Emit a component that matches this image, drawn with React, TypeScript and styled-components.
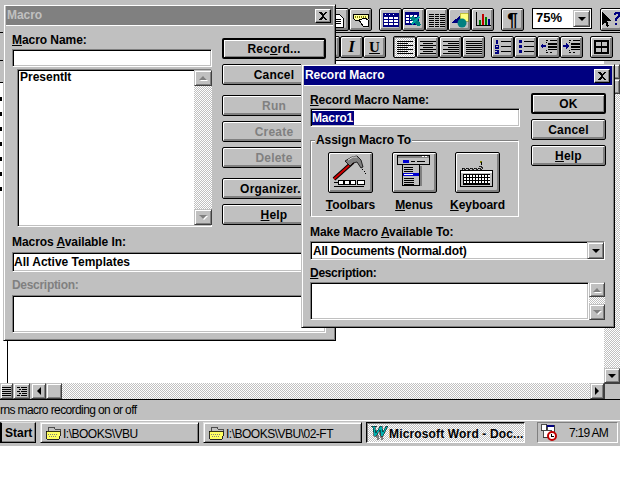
import React from "react";
import styled, { createGlobalStyle, css } from "styled-components";

const Global = createGlobalStyle`
  html, body { margin: 0; padding: 0; background: #fff; }
  body { font-family: "Liberation Sans", Arial, sans-serif; font-size: 12px; color: #000; }
  * { box-sizing: border-box; }
`;

const hatch = css`
  background: repeating-conic-gradient(#c0c0c0 0 25%, #fff 0 50%) 0 0 / 2px 2px;
`;
const raised = css`
  background: #c0c0c0;
  border: 1px solid;
  border-color: #dfdfdf #000 #000 #dfdfdf;
  box-shadow: inset 1px 1px #fff, inset -1px -1px #808080;
`;
const sunken = css`
  border: 1px solid;
  border-color: #808080 #fff #fff #808080;
  box-shadow: inset 1px 1px #000, inset -1px -1px #c0c0c0;
  background: #fff;
`;

const Screen = styled.div`
  position: relative;
  width: 620px;
  height: 446px;
  overflow: hidden;
  background: #c0c0c0;
  display: flex;
  flex-direction: column;
`;

const ToolRow = styled.div<{ $left: number; $top: number; $h: number; $bottom: number }>`
  display: flex;
  flex: none;
  padding: ${(p) => p.$top}px 0 ${(p) => p.$bottom}px ${(p) => p.$left}px;
  height: ${(p) => p.$top + p.$h + p.$bottom + 1}px;
  border-bottom: 1px solid #000;
  overflow: hidden;
`;
const ToolGroup = styled.div<{ $after?: number }>`
  display: flex;
  flex: none;
  margin-right: ${(p) => p.$after ?? 0}px;
`;
const ToolBtn = styled.div<{ $on?: boolean }>`
  flex: none;
  width: 23px;
  height: 100%;
  display: flex;
  align-items: center;
  justify-content: center;
  font-weight: bold;
  border: 1px solid #000;
  border-radius: 2px;
  background: #c0c0c0;
  box-shadow: inset 1px 1px #fff, inset -1px -1px #808080, inset -2px -2px #808080;
  ${(p) =>
    p.$on &&
    css`
      ${hatch};
      box-shadow: inset 1px 1px #808080;
    `}
`;
const Pilcrow = styled.span`
  font-family: "Liberation Sans", sans-serif;
  font-size: 19px;
  font-weight: bold;
`;
const ItalicGlyph = styled.span`
  font-family: "Liberation Serif", serif;
  font-size: 17px;
  font-style: italic;
`;
const UnderGlyph = styled.span`
  font-family: "Liberation Serif", serif;
  font-size: 15px;
  text-decoration: underline;
`;
const ZoomCombo = styled.div`
  flex: none;
  width: 60px;
  height: 21px;
  border: 1px solid #000;
  background: #fff;
  display: flex;
  padding: 1px;
`;
const ZoomValue = styled.div`
  flex: 1;
  font-size: 13px;
  font-weight: bold;
  line-height: 16px;
  padding-left: 2px;
`;

const Workspace = styled.div`
  flex: 1;
  display: flex;
  min-height: 0;
`;
const LeftEdge = styled.div`
  flex: none;
  width: 8px;
  border-right: 1px solid #000;
  background: #fff;
  height: 100%;
  display: flex;
  flex-direction: column;
  gap: 11px;
`;
const RulerStub = styled.div`
  flex: none;
  height: 22px;
  background: #c0c0c0;
  border-bottom: 1px solid #000;
  margin-bottom: 3px;
`;
const EdgeMark = styled.div`
  width: 2px;
  height: 4px;
  background: #000;
`;
const DocArea = styled.div`
  flex: 1;
  background: #fff;
`;
const VScroll = styled.div`
  flex: none;
  width: 16px;
  display: flex;
  flex-direction: column;
  padding-top: 3px;
  background: #c0c0c0;
`;
const VTrack = styled.div`
  flex: 1;
  ${hatch};
`;
const ScrollBtn = styled.div<{ $w?: number; $h?: number }>`
  ${raised};
  flex: none;
  width: ${(p) => (p.$w ? `${p.$w}px` : "100%")};
  height: ${(p) => (p.$h ? `${p.$h}px` : "100%")};
  display: flex;
  align-items: center;
  justify-content: center;
  box-shadow: inset 1px 1px #fff, inset -1px -1px #808080;
  border-color: #c0c0c0 #404040 #404040 #c0c0c0;
`;
const Arrow = styled.i<{ $dir: "up" | "down" | "left" | "right"; $off?: boolean }>`
  display: block;
  width: 0;
  height: 0;
  ${(p) => {
    const c = p.$off ? "#808080" : "#000";
    if (p.$dir === "up") return `border:4px solid transparent;border-top:0;border-bottom-color:${c};`;
    if (p.$dir === "down") return `border:4px solid transparent;border-bottom:0;border-top-color:${c};`;
    if (p.$dir === "left") return `border:4px solid transparent;border-left:0;border-right-color:${c};`;
    return `border:4px solid transparent;border-right:0;border-left-color:${c};`;
  }}
  ${(p) => p.$off && "filter: drop-shadow(1px 1px 0 #fff);"}
`;

const HScroll = styled.div`
  flex: none;
  height: 17px;
  display: flex;
  border-bottom: 1px solid #000;
`;
const HTrack = styled.div`
  flex: 1;
  ${hatch};
`;
const ViewBtn = styled(ScrollBtn)<{ $gap?: number }>`
  margin-right: ${(p) => p.$gap ?? 0}px;
`;
const Corner = styled.div`
  flex: none;
  width: 16px;
  background: #c0c0c0;
  border-left: 1px solid #404040;
  border-top: 1px solid #404040;
`;

const StatusBar = styled.div`
  flex: none;
  height: 20px;
  line-height: 21px;
  font-size: 12px;
  white-space: nowrap;
  letter-spacing: -0.6px;
`;
const Taskbar = styled.div`
  flex: none;
  height: 26px;
  border-top: 1px solid #fff;
  display: flex;
  padding-top: 1px;
`;
const StartBtn = styled.div`
  ${raised};
  flex: none;
  width: 36px;
  height: 21px;
  font-weight: bold;
  font-size: 12px;
  line-height: 21px;
  padding-left: 3px;
  margin-right: 4px;
  border-left: 2px solid #000;
  box-shadow: inset -1px -1px #808080;
`;
const TaskBtn = styled.div<{ $active?: boolean; $after: number }>`
  ${raised};
  flex: none;
  width: 159px;
  height: 21px;
  margin-right: ${(p) => p.$after}px;
  display: flex;
  align-items: center;
  padding-left: 4px;
  gap: 1px;
  font-size: 12px;
  white-space: nowrap;
  overflow: hidden;
  ${(p) =>
    p.$active &&
    css`
      ${hatch};
      font-weight: bold;
      border-color: #000 #fff #fff #000;
      box-shadow: inset 1px 1px #808080;
    `}
`;
const TaskLabel = styled.span<{ $wide?: boolean }>`
  padding-top: 2px;
  letter-spacing: ${(p) => (p.$wide ? "0.15px" : "-0.5px")};
`;
const Tray = styled.div`
  flex: none;
  width: 81px;
  height: 21px;
  border: 1px solid;
  border-color: #808080 #fff #fff #808080;
  display: flex;
  align-items: center;
  padding-left: 2px;
  gap: 12px;
  font-size: 12px;
  letter-spacing: -0.7px;
`;
const Clock = styled.span`
  padding-top: 1px;
`;

const Win = styled.div<{ $x: number; $y: number; $w: number; $h: number }>`
  position: absolute;
  left: ${(p) => p.$x}px;
  top: ${(p) => p.$y}px;
  width: ${(p) => p.$w}px;
  height: ${(p) => p.$h}px;
  background: #c0c0c0;
  border: 1px solid;
  border-color: #c0c0c0 #000 #000 #c0c0c0;
  box-shadow: inset 1px 1px #fff, inset -1px -1px #808080;
  padding: 1px 2px 0 2px;
  display: flex;
  flex-direction: column;
`;
const TitleBar = styled.div<{ $active?: boolean }>`
  flex: none;
  height: 20px;
  border-bottom: 1px solid #fff;
  background: ${(p) => (p.$active ? "#000080" : "#808080")};
  color: ${(p) => (p.$active ? "#fff" : "#c0c0c0")};
  font-weight: bold;
  font-size: 12px;
  line-height: 19px;
  padding: 0 2px 0 1px;
  display: flex;
  align-items: center;
  justify-content: space-between;
  letter-spacing: -0.05px;
`;
const CloseBtn = styled.div`
  ${raised};
  width: 16px;
  height: 14px;
  display: flex;
  align-items: center;
  justify-content: center;
  border-color: #fff #000 #000 #fff;
  box-shadow: inset -1px -1px #808080;
`;
const DialogBody = styled.div<{ $top: number; $left: number }>`
  flex: 1;
  padding: ${(p) => p.$top}px 0 0 ${(p) => p.$left}px;
  display: flex;
  flex-direction: column;
`;
const TopRow = styled.div<{ $gap: number }>`
  display: flex;
  gap: ${(p) => p.$gap}px;
  align-items: flex-start;
`;
const Column = styled.div<{ $w: number }>`
  flex: none;
  width: ${(p) => p.$w}px;
  display: flex;
  flex-direction: column;
`;
const ButtonColumn = styled(Column)<{ $pad?: number }>`
  padding-top: ${(p) => p.$pad ?? 0}px;
  gap: 5px;
`;
const Label = styled.div<{ $off?: boolean; $top?: number; $tight?: boolean }>`
  font-weight: bold;
  font-size: 12px;
  line-height: 15px;
  margin-bottom: -2px;
  white-space: nowrap;
  letter-spacing: ${(p) => (p.$tight ? "-0.3px" : "-0.06px")};
  margin-top: ${(p) => p.$top ?? 0}px;
  color: ${(p) => (p.$off ? "#808080" : "#000")};
`;
const Key = styled.span`
  text-decoration: underline;
`;
const TextField = styled.div<{ $h: number; $w?: number; $top?: number; $left?: number }>`
  ${sunken};
  flex: none;
  height: ${(p) => p.$h}px;
  width: ${(p) => (p.$w ? `${p.$w}px` : "100%")};
  margin-top: ${(p) => p.$top ?? 0}px;
  margin-left: ${(p) => p.$left ?? 0}px;
  font-weight: bold;
  font-size: 12px;
  line-height: 16px;
  padding: 1px 1px;
  white-space: nowrap;
  display: flex;
`;
const ListBox = styled(TextField)`
  padding: 0 0 1px 2px;
  justify-content: space-between;
  line-height: 15px;
`;
const Selected = styled.span`
  background: #000080;
  color: #fff;
  height: 14px;
  line-height: 14px;
  margin-top: 1px;
  padding: 0 1px 0 0;
  letter-spacing: -0.15px;
`;
const ListScroll = styled.div`
  flex: none;
  width: 18px;
  height: 100%;
  margin: 0 -1px 0 0;
  display: flex;
  flex-direction: column;
  justify-content: space-between;
  ${hatch};
`;
const Btn = styled.div<{ $default?: boolean; $off?: boolean; $h?: number; $sep?: boolean }>`
  flex: none;
  height: 21px;
  display: flex;
  align-items: center;
  justify-content: center;
  font-weight: bold;
  font-size: 12px;
  letter-spacing: 0.2px;
  margin-top: ${(p) => (p.$sep ? 5 : 0)}px;
  background: #c0c0c0;
  color: ${(p) => (p.$off ? "#808080" : "#000")};
  border: 1px solid #000;
  border-radius: 2px;
  box-shadow: inset 1px 1px #fff, inset -1px -1px #808080, inset -2px -2px #808080;
  ${(p) =>
    p.$default &&
    css`
      border-width: 2px;
      box-shadow: inset 1px 1px #fff, inset -1px -1px #808080;
    `}
`;
const Group = styled.div`
  position: relative;
  height: 77px;
  width: 209px;
  margin-top: 13px;
  border: 1px solid;
  border-color: #808080 #fff #fff #808080;
  box-shadow: inset 1px 1px #fff, 1px 1px #808080 inset;
  padding: 11px 0 0 8px;
  display: grid;
  grid-template-columns: 63px 64px 63px;
`;
const Legend = styled.span`
  position: absolute;
  left: 4px;
  top: -7px;
  background: #c0c0c0;
  padding: 0 1px;
  font-weight: bold;
  font-size: 12px;
  line-height: 13px;
  white-space: nowrap;
  letter-spacing: -0.05px;
`;
const AssignItem = styled.div`
  display: flex;
  flex-direction: column;
  align-items: center;
  gap: 5px;
`;
const BigBtn = styled.div`
  width: 45px;
  height: 41px;
  background: #c0c0c0;
  border: 1px solid #000;
  border-radius: 2px;
  box-shadow: inset 1px 1px #fff, inset -1px -1px #808080, inset -2px -2px #808080;
  display: flex;
`;
const ComboRow = styled.div<{ $w: number; $top?: number }>`
  ${sunken};
  flex: none;
  width: ${(p) => p.$w}px;
  height: 19px;
  margin-top: ${(p) => p.$top ?? 0}px;
  display: flex;
  justify-content: space-between;
  font-weight: bold;
  font-size: 12px;
  line-height: 16px;
  padding: 1px 0 0 2px;
  letter-spacing: -0.2px;
  white-space: nowrap;
`;
const DescRow = styled.div`
  display: flex;
  margin-top: 3px;
`;
const Spin = styled.div`
  flex: none;
  width: 16px;
  height: 38px;
  display: flex;
  flex-direction: column;
  justify-content: space-between;
  ${hatch};
`;
const Px = styled.svg`
  display: block;
  flex: none;
  shape-rendering: crispEdges;
`;
const Smooth = styled.g`
  shape-rendering: auto;
`;

const Lines = ({ rows, color = "#000", w = 16, h = 14 }: { rows: [number, number, number][]; color?: string; w?: number; h?: number }) => (
  <Px width={w} height={h} viewBox={`0 0 ${w} ${h}`}>
    {rows.map(([x, y, l], i) => (
      <rect key={i} x={x} y={y} width={l} height={1} fill={color} />
    ))}
  </Px>
);
const alignLeft: [number, number, number][] = [[0,1,16],[0,3,11],[0,5,16],[0,7,11],[0,9,16],[0,11,11],[0,13,16]];
const alignCenter: [number, number, number][] = [[0,1,16],[3,3,10],[0,5,16],[3,7,10],[0,9,16],[3,11,10],[0,13,16]];
const alignRight: [number, number, number][] = [[0,1,16],[5,3,11],[0,5,16],[5,7,11],[0,9,16],[5,11,11],[0,13,16]];
const justify: [number, number, number][] = [[0,1,16],[0,3,16],[0,5,16],[0,7,16],[0,9,16],[0,11,16],[0,13,16]];

const CloseX = () => (
  <Px width={10} height={8} viewBox="0 0 10 8">
    <path d="M1 0h2l2 2 2-2h2L6 4l3 4H7L5 6 3 8H1l3-4z" fill="#000" />
  </Px>
);
const DocIcon = () => (
  <Px width={15} height={16} viewBox="0 0 15 16">
    <path d="M2 2h7l4 4v9H2z" fill="#fff" stroke="#000" />
    <rect x="4" y="7" width="7" height="1" /><rect x="4" y="9" width="7" height="1" /><rect x="4" y="11" width="7" height="1" />
    <rect x="0" y="1" width="3" height="2" fill="#ff0" />
  </Px>
);
const KeyHand = () => (
  <Px width={18} height={18} viewBox="0 0 18 18">
    <path d="M1 3h15v5l-6 1H3L1 7z" fill="#ffffa0" stroke="#000" />
    {[3,5,7,9,11,13].map((x) => <rect key={x} x={x} y="5" width="1" height="2" fill="#808000" />)}
    <path d="M7 9l4 6h5V9l-3-2z" fill="#fff" stroke="#000" />
  </Px>
);
const TableIcon = () => (
  <Px width={16} height={14} viewBox="0 0 16 14">
    <rect width="16" height="14" fill="#000080" />
    <rect x="2" y="1" width="1" height="1" fill="#fff" /><rect x="6" y="1" width="1" height="1" fill="#fff" /><rect x="10" y="1" width="1" height="1" fill="#fff" />
    {[1,6,11].map((x) => [4,7,10].map((y) => <rect key={`${x}${y}`} x={x} y={y} width="4" height="2" fill="#fff" />))}
  </Px>
);
const SheetIcon = () => (
  <Px width={17} height={15} viewBox="0 0 17 15">
    <rect width="14" height="13" fill="#000080" />
    {[1,5,9].map((x) => [3,6,9].map((y) => <rect key={`${x}${y}`} x={x} y={y} width="3" height="2" fill="#fff" />))}
    <path d="M5 5l3-1 7 6 1 3-3 1-7-6z" fill="#008080" />
    <path d="M13 4l2 1-7 8-2-1z" fill="#00a0a0" />
  </Px>
);
const ColumnsIcon = () => (
  <Px width={16} height={14} viewBox="0 0 16 14">
    {[1,3,5,7,9,11,13].map((y) => <rect key={y} y={y} width="16" height="1" />)}
    <rect x="5" width="1" height="14" fill="#c0c0c0" /><rect x="10" width="1" height="14" fill="#c0c0c0" />
  </Px>
);
const DrawIcon = () => (
  <Px width={18} height={16} viewBox="0 0 18 16">
    <rect x="9" y="1" width="8" height="8" fill="#ffff80" stroke="#808000" strokeWidth="0.5" />
    <path d="M0 11L9 4v7z" fill="#000080" />
    <Smooth><circle cx="11" cy="11" r="4.5" fill="#008080" /></Smooth>
  </Px>
);
const ChartIcon = () => (
  <Px width={16} height={15} viewBox="0 0 16 15">
    <rect x="1" y="0" width="1" height="14" /><rect x="1" y="13" width="15" height="1" />
    <rect x="4" y="8" width="2" height="5" fill="#008000" />
    <rect x="7" y="2" width="2" height="11" fill="#c00000" />
    <rect x="10" y="5" width="2" height="8" fill="#008000" />
    <rect x="13" y="7" width="2" height="6" fill="#000080" />
  </Px>
);
const HelpIcon = () => (
  <Px width={21} height={17} viewBox="0 0 21 17">
    <path d="M1 1v13l3-3 2 5 2-1-2-5h4z" fill="#000" />
    <path d="M13 4V2l1-1h4l1 1v4l-3 2v2h-2V7l3-2V3h-2v1zM14 12h2v2h-2z" fill="#000080" />
  </Px>
);
const NumList = () => (
  <Px width={16} height={16} viewBox="0 0 16 16">
    <rect x="1" y="1" width="2" height="4" fill="#000080" /><rect x="0" y="6" width="4" height="4" fill="#000080" /><rect x="1" y="7" width="2" height="1" fill="#c0c0c0" />
    <rect x="0" y="11" width="4" height="4" fill="#000080" /><rect x="0" y="12" width="2" height="1" fill="#c0c0c0" />
    <rect x="6" y="2" width="10" height="1" /><rect x="6" y="7" width="10" height="1" /><rect x="6" y="12" width="10" height="1" />
  </Px>
);
const BulList = () => (
  <Px width={16} height={16} viewBox="0 0 16 16">
    {[1,6,11].map((y) => <rect key={y} x="1" y={y} width="3" height="3" fill="#000080" />)}
    <rect x="6" y="2" width="10" height="1" /><rect x="6" y="7" width="10" height="1" /><rect x="6" y="12" width="10" height="1" />
  </Px>
);
const Indent = ({ out }: { out?: boolean }) => (
  <Px width={17} height={16} viewBox="0 0 17 16">
    <rect x="6" y="1" width="2" height="1" /><rect x="10" y="1" width="7" height="1" />
    <rect x="8" y="4" width="9" height="2" /><rect x="8" y="7" width="9" height="2" /><rect x="8" y="10" width="9" height="1" />
    <rect x="6" y="13" width="2" height="1" /><rect x="10" y="13" width="2" height="1" />
    <rect x="6" y="3" width="1" height="1" /><rect x="6" y="11" width="1" height="1" />
    {out ? <path d="M0 7l3-3v2h3v2H3v2z" fill="#000080" /> : <path d="M6 7L3 4v2H0v2h3v2z" fill="#000080" />}
  </Px>
);
const Borders = () => (
  <Px width={15} height={14} viewBox="0 0 15 14">
    <path d="M0 0h15v14H0z" fill="#000" />
    <path d="M2 2h5v4H2zM8 2h5v4H8zM2 8h5v4H2zM8 8h5v4H8z" fill="#c0c0c0" />
  </Px>
);
const ViewNormal = () => (
  <Lines w={9} h={9} rows={[[0,0,9],[0,2,9],[0,4,9],[0,6,9],[0,8,9]]} />
);
const ViewOutline = () => (
  <Lines w={10} h={9} rows={[[0,0,3],[4,0,6],[2,2,2],[5,2,5],[0,4,3],[4,4,6],[2,6,2],[5,6,5],[0,8,3],[4,8,6]]} />
);
const Folder = () => (
  <Px width={17} height={14} viewBox="0 0 17 14">
    <path d="M4 1h5l1 2h5v2H3z" fill="#c0c0c0" stroke="#000" strokeWidth="0.6" />
    <path d="M1 5h13l2 1-2 7H2z" fill="#ffff60" stroke="#000" strokeWidth="0.8" />
    {[3,5,7,9,11].map((x) => <rect key={x} x={x} y="8" width="1" height="1" fill="#808080" />)}
    {[4,6,8,10].map((x) => <rect key={x} x={x} y="10" width="1" height="1" fill="#808080" />)}
  </Px>
);
const WordIcon = () => (
  <Px width={17} height={18} viewBox="0 0 17 18">
    <path d="M3 6l3 10 3-1-3-9zM7 6l3 10 3-1-3-9z" fill="#808080" />
    <path d="M0 2h6L4 3l1 6 4-7h2l1 6 3-6h2l-5 10h-2L9 6l-4 6H3L2 4z" fill="#00b0b0" stroke="#000" strokeWidth="0.5" />
  </Px>
);
const TrayIcon = () => (
  <Px width={17} height={17} viewBox="0 0 17 17">
    <rect x="1" y="0" width="5" height="6" fill="#fff" stroke="#000" strokeWidth="0.7" />
    <rect x="7" y="1" width="7" height="8" fill="#fff" stroke="#000" strokeWidth="0.7" />
    <rect x="7" y="1" width="7" height="2" fill="#000080" />
    <rect x="3" y="6" width="8" height="7" fill="#fff" stroke="#000" strokeWidth="0.7" />
    <Smooth><circle cx="12" cy="12" r="4" fill="#fff" stroke="#c00000" strokeWidth="2" /></Smooth>
    <rect x="11" y="10" width="1" height="3" /><rect x="11" y="12" width="3" height="1" />
  </Px>
);
const HammerArt = () => (
  <Px width={41} height={37} viewBox="0 0 41 37">
    <rect x="5" y="33" width="30" height="1" fill="#000" />
    <rect x="5" y="29" width="4" height="1" fill="#000" />
    {[9,15,21].map((x) => <rect key={x} x={x} y="27.5" width="5" height="4" fill="#fff" stroke="#000" />)}
    <rect x="28.5" y="27.5" width="7" height="4" fill="#fff" stroke="#000" />
    <Smooth>
      <path d="M5 26L24 9" stroke="#000" strokeWidth="4" />
      <path d="M5 26L24 9" stroke="#d00000" strokeWidth="2" />
      <path d="M16 8l7-4 5-1 4 4 2 7-2 1-4-6-4 1-3 3z" fill="#808080" stroke="#000" strokeWidth="0.8" />
      <path d="M19 7l5-3 4 0" stroke="#fff" strokeWidth="0.8" fill="none" />
    </Smooth>
    <rect x="33" y="16" width="1" height="1" /><rect x="35" y="18" width="1" height="1" /><rect x="36" y="20" width="1" height="1" />
  </Px>
);
const MenuArt = () => (
  <Px width={41} height={37} viewBox="0 0 41 37">
    <rect x="4.5" y="2.5" width="32" height="9" fill="#c0c0c0" stroke="#000" />
    <rect x="5" y="3" width="31" height="2" fill="#808080" />
    <rect x="29" y="3" width="2" height="1" fill="#fff" /><rect x="32" y="3" width="2" height="1" fill="#fff" />
    <rect x="10" y="7" width="6" height="3" fill="#0000d0" />
    <rect x="18" y="8" width="4" height="1" /><rect x="24" y="8" width="8" height="1" />
    <rect x="9.5" y="11.5" width="17" height="21" fill="#c0c0c0" stroke="#000" />
    <rect x="27" y="13" width="2" height="20" fill="#808080" />
    {[14,16,18].map((y) => <rect key={y} x="11" y={y} width="9" height="1" />)}
    <rect x="10" y="20" width="16" height="3" fill="#0000d0" />
    <rect x="11" y="21" width="9" height="1" fill="#fff" />
    {[25,27,29,31].map((y) => <rect key={y} x="11" y={y} width="10" height="1" />)}
  </Px>
);
const KeyboardArt = () => (
  <Px width={41} height={37} viewBox="0 0 41 37">
    <path d="M6 17v-2h2v1h2v-1h2v1h2v-1h2v1h2v-1h2v1h2v-1h2v1h2v-2h-1v-1h-2" stroke="#000" fill="none" strokeWidth="0.8" />
    <rect x="24" y="8" width="2" height="2" fill="#808000" /><rect x="25" y="9" width="1" height="3" fill="#000" />
    <rect x="4.5" y="17.5" width="32" height="16" fill="#c0c0c0" stroke="#000" />
    <rect x="5" y="18" width="31" height="2" fill="#fff" />
    <rect x="7" y="21" width="27" height="11" fill="#000" />
    {[22,25,28].map((y) => [8,11,14,17,20,23,26,29,32].map((x) => <rect key={`${x}-${y}`} x={x} y={y} width="2" height="2" fill="#fff" />))}
  </Px>
);

const DownBtn = styled(ScrollBtn)`
  margin: -1px 0 0 0;
`;

export default function App() {
  return (
    <Screen>
      <Global />
      <ToolRow $left={326} $top={8} $h={23} $bottom={1}>
        <ToolGroup $after={7}>
          <ToolBtn><DocIcon /></ToolBtn>
          <ToolBtn><KeyHand /></ToolBtn>
        </ToolGroup>
        <ToolGroup $after={7}>
          <ToolBtn><TableIcon /></ToolBtn>
          <ToolBtn><SheetIcon /></ToolBtn>
          <ToolBtn><ColumnsIcon /></ToolBtn>
          <ToolBtn><DrawIcon /></ToolBtn>
          <ToolBtn><ChartIcon /></ToolBtn>
        </ToolGroup>
        <ToolGroup $after={8}>
          <ToolBtn><Pilcrow>¶</Pilcrow></ToolBtn>
        </ToolGroup>
        <ToolGroup $after={8}>
          <ZoomCombo>
            <ZoomValue>75%</ZoomValue>
            <ScrollBtn $w={17} $h={17}><Arrow $dir="down" /></ScrollBtn>
          </ZoomCombo>
        </ToolGroup>
        <ToolGroup>
          <ToolBtn><HelpIcon /></ToolBtn>
        </ToolGroup>
      </ToolRow>
      <ToolRow $left={317} $top={3} $h={22} $bottom={2}>
        <ToolGroup $after={7}>
          <ToolBtn>B</ToolBtn>
          <ToolBtn><ItalicGlyph>I</ItalicGlyph></ToolBtn>
          <ToolBtn><UnderGlyph>U</UnderGlyph></ToolBtn>
        </ToolGroup>
        <ToolGroup $after={6}>
          <ToolBtn $on><Lines rows={alignLeft} /></ToolBtn>
          <ToolBtn><Lines rows={alignCenter} /></ToolBtn>
          <ToolBtn><Lines rows={alignRight} /></ToolBtn>
          <ToolBtn><Lines rows={justify} /></ToolBtn>
        </ToolGroup>
        <ToolGroup $after={7}>
          <ToolBtn><NumList /></ToolBtn>
          <ToolBtn><BulList /></ToolBtn>
          <ToolBtn><Indent out /></ToolBtn>
          <ToolBtn><Indent /></ToolBtn>
        </ToolGroup>
        <ToolGroup>
          <ToolBtn><Borders /></ToolBtn>
        </ToolGroup>
      </ToolRow>
      <Workspace>
        <LeftEdge>
          <RulerStub />
          <EdgeMark /><EdgeMark /><EdgeMark /><EdgeMark /><EdgeMark /><EdgeMark /><EdgeMark />
        </LeftEdge>
        <DocArea />
        <VScroll>
          <ScrollBtn $h={15} />
          <ScrollBtn $h={15} />
          <VTrack />
          <ScrollBtn $h={15}><Arrow $dir="down" /></ScrollBtn>
        </VScroll>
      </Workspace>
      <HScroll>
        <ViewBtn $w={13}><ViewNormal /></ViewBtn>
        <ViewBtn $w={17} $gap={1}><ViewOutline /></ViewBtn>
        <ViewBtn $w={15}><Arrow $dir="left" /></ViewBtn>
        <ViewBtn $w={16} />
        <HTrack />
        <ViewBtn $w={14}><Arrow $dir="right" /></ViewBtn>
        <Corner />
      </HScroll>
      <StatusBar>rns macro recording on or off</StatusBar>
      <Taskbar>
        <StartBtn>Start</StartBtn>
        <TaskBtn $after={4}><Folder /><TaskLabel>I:\BOOKS\VBU</TaskLabel></TaskBtn>
        <TaskBtn $after={4}><Folder /><TaskLabel>I:\BOOKS\VBU\02-FT</TaskLabel></TaskBtn>
        <TaskBtn $active $after={12}><WordIcon /><TaskLabel $wide>Microsoft Word - Doc...</TaskLabel></TaskBtn>
        <Tray><TrayIcon /><Clock>7:19 AM</Clock></Tray>
      </Taskbar>

      <Win $x={3} $y={4} $w={333} $h={337}>
        <TitleBar>
          Macro
          <CloseBtn><CloseX /></CloseBtn>
        </TitleBar>
        <DialogBody $top={7} $left={6}>
          <TopRow $gap={10}>
            <Column $w={200}>
              <Label><Key>M</Key>acro Name:</Label>
              <TextField $h={18} $top={3} />
              <ListBox $h={158} $w={195} $left={5} $top={2}>
                PresentIt
                <ListScroll>
                  <ScrollBtn $h={16}><Arrow $dir="up" $off /></ScrollBtn>
                  <ScrollBtn $h={16}><Arrow $dir="down" $off /></ScrollBtn>
                </ListScroll>
              </ListBox>
            </Column>
            <ButtonColumn $w={104} $pad={5}>
              <Btn $default>Rec<Key>o</Key>rd...</Btn>
              <Btn>Cancel</Btn>
              <Btn $off $sep>Run</Btn>
              <Btn $off>Create</Btn>
              <Btn $off>Delete</Btn>
              <Btn $sep>Or<Key>g</Key>anizer...</Btn>
              <Btn><Key>H</Key>elp</Btn>
            </ButtonColumn>
          </TopRow>
          <Label $top={8}>Macros <Key>A</Key>vailable In:</Label>
          <TextField $h={20} $w={314} $top={4}>All Active Templates</TextField>
          <Label $off $tight $top={6}>Description:</Label>
          <TextField $h={38} $w={314} $top={4} />
        </DialogBody>
      </Win>

      <Win $x={301} $y={64} $w={314} $h={264}>
        <TitleBar $active>
          Record Macro
          <CloseBtn><CloseX /></CloseBtn>
        </TitleBar>
        <DialogBody $top={7} $left={6}>
          <TopRow $gap={11}>
            <Column $w={210}>
              <Label><Key>R</Key>ecord Macro Name:</Label>
              <TextField $h={19} $top={2}><Selected>Macro1</Selected></TextField>
              <Group>
                <Legend>Assign Macro To</Legend>
                <AssignItem><BigBtn><HammerArt /></BigBtn><Label><Key>T</Key>oolbars</Label></AssignItem>
                <AssignItem><BigBtn><MenuArt /></BigBtn><Label><Key>M</Key>enus</Label></AssignItem>
                <AssignItem><BigBtn><KeyboardArt /></BigBtn><Label><Key>K</Key>eyboard</Label></AssignItem>
              </Group>
            </Column>
            <ButtonColumn $w={75}>
              <Btn $default>OK</Btn>
              <Btn>Cancel</Btn>
              <Btn><Key>H</Key>elp</Btn>
            </ButtonColumn>
          </TopRow>
          <Label $top={8}>Make Macro <Key>A</Key>vailable To:</Label>
          <ComboRow $w={295} $top={3}>
            All Documents (Normal.dot)
            <DownBtn $w={17} $h={17}><Arrow $dir="down" /></DownBtn>
          </ComboRow>
          <Label $tight $top={6}><Key>D</Key>escription:</Label>
          <DescRow>
            <TextField $h={38} $w={279} />
            <Spin>
              <ScrollBtn $h={15}><Arrow $dir="up" $off /></ScrollBtn>
              <ScrollBtn $h={16}><Arrow $dir="down" $off /></ScrollBtn>
            </Spin>
          </DescRow>
        </DialogBody>
      </Win>
    </Screen>
  );
}
